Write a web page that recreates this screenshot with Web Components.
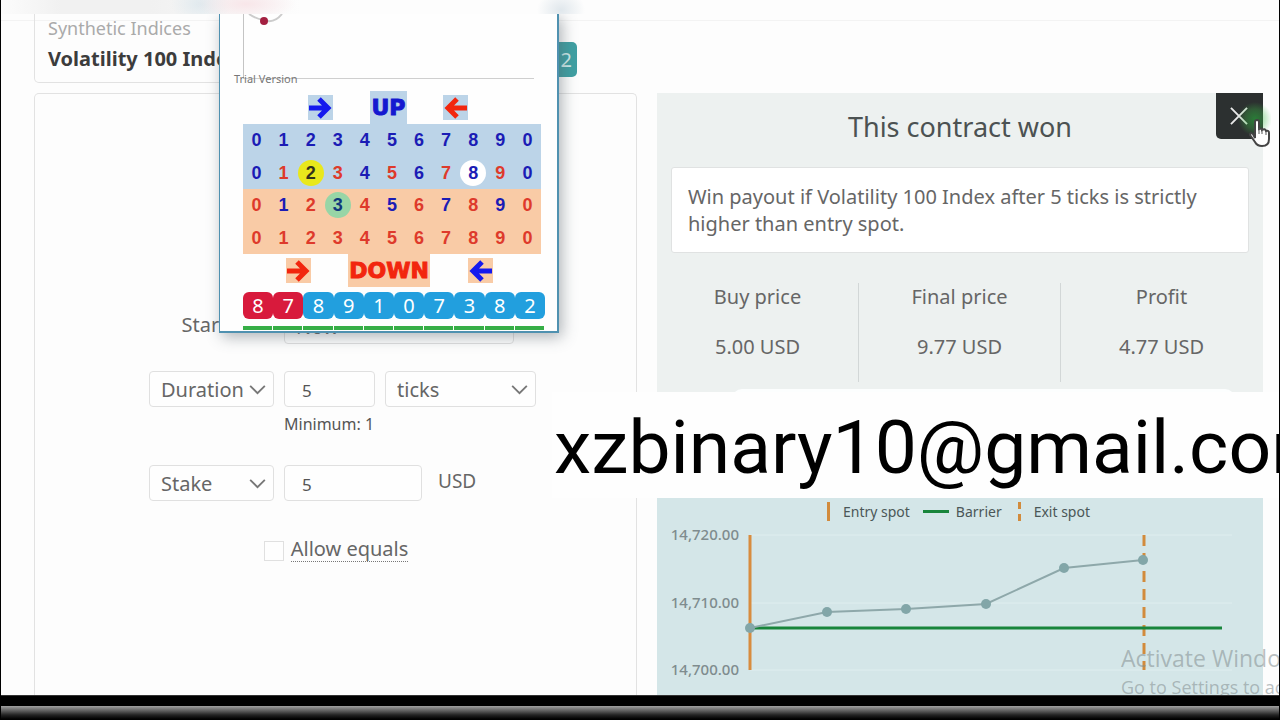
<!DOCTYPE html>
<html lang="en">
<head>
<meta charset="utf-8">
<title>Contract result</title>
<style>
  html, body { margin: 0; background: #000; }
  body { font-family: "Noto Sans", "Open Sans", sans-serif; color: #666; }
</style>
</head>
<body>
<trade-stage>
  <symbol-card slot="left" market="Synthetic Indices" name="Volatility 100 Index"></symbol-card>
  <trade-form slot="left"></trade-form>
  <contract-panel slot="right" heading="This contract won">
    <span slot="summary">Win payout if Volatility 100 Index after 5 ticks is strictly higher than entry spot.</span>
    <price-cell slot="prices" label="Buy price">5.00 USD</price-cell>
    <price-cell slot="prices" label="Final price">9.77 USD</price-cell>
    <price-cell slot="prices" label="Profit">4.77 USD</price-cell>
    <tick-chart slot="chart"></tick-chart>
  </contract-panel>
  <last-digit slot="overlay">2</last-digit>
  <analysis-window slot="overlay"></analysis-window>
  <os-watermark slot="overlay"></os-watermark>
  <mail-banner slot="overlay">xzbinary10@gmail.com</mail-banner>
  <hand-pointer slot="overlay"></hand-pointer>
</trade-stage>

<script>
const define = (tag, render) => customElements.define(tag, class extends HTMLElement {
  constructor() { super(); this.attachShadow({ mode: 'open' }); }
  connectedCallback() { this.shadowRoot.innerHTML = render(this); }
});

define('trade-stage', () => `
<style>
  :host { display: grid; grid-template-rows: 14px 1fr 25px; min-height: 100vh; position: relative;
    overflow: hidden; box-sizing: border-box; border: solid #000; border-width: 0 1px; background: #fdfdfd; }
  .strip { background:
    radial-gradient(ellipse 50px 16px at 245px 4px, #f8e6e9, transparent),
    radial-gradient(ellipse 30px 20px at 200px 4px, #dfe9ee, transparent),
    radial-gradient(ellipse 24px 20px at 560px 10px, #e0e7ec, transparent),
    linear-gradient(90deg, #fcfcfc, #f1f1f1 60px, #f1f1f1 150px, #fdfdfd 300px); }
  main { display: grid; grid-template-columns: 199fr 200fr; gap: 20px; padding: 0 16px 0 33px;
    background: linear-gradient(#f3f3f3, #f3f3f3) 0 6px / 100% 1px no-repeat; }
  .left { display: flex; flex-direction: column; gap: 10px; min-width: 0; }
  .right { display: flex; flex-direction: column; padding-top: 79px; min-width: 0; }
  .bar { background: linear-gradient(#333 0 1px, #000 1px 11px, #a0a0a0 11px, #777 14px, #222 20px, #000 24px);
    position: relative; z-index: 5; }
</style>
<div class="strip"></div>
<main>
  <div class="left"><slot name="left"></slot></div>
  <div class="right"><slot name="right"></slot></div>
</main>
<div class="bar"></div>
<slot name="overlay"></slot>`);

define('symbol-card', el => `
<style>
  :host { display: block; box-sizing: border-box; height: 69px; width: 440px; padding: 2px 13px;
    border: 1px solid #e2e2e2; border-top: 0; border-radius: 0 0 5px 5px; }
  div { font-size: 18px; line-height: 24px; color: #aaa; }
  strong { display: block; margin-top: 6px; font-size: 20px; line-height: 26px; font-weight: 700; color: #3c3c3c; }
</style>
<div>${el.getAttribute('market')}</div><strong>${el.getAttribute('name')}</strong>`);

define('select-field', el => `
<style>
  :host { display: block; position: relative; }
  select { appearance: none; box-sizing: border-box; width: 100%; height: 36px; margin: 0; padding: 0 11px;
    font: inherit; font-size: 20px; color: #666; background: #fefefe; border: 1px solid #e0e0e0; border-radius: 4px; }
  svg { position: absolute; right: 8px; top: 13px; pointer-events: none; }
</style>
<select aria-label="${el.getAttribute('label')}"><option>${el.textContent}</option></select>
<svg width="17" height="11" viewBox="0 0 18 12" fill="none" stroke="#777" stroke-width="2"><path d="M1 2 L9 10 L17 2"/></svg>`);

define('trade-form', () => `
<style>
  :host { display: block; flex: 1; box-sizing: border-box; padding: 214px 0 0 114px;
    border: 1px solid #e2e2e2; border-bottom: 0; border-radius: 5px 5px 0 0; }
  form { display: grid; width: 387px; grid-template-columns: 125px 91px 1fr; column-gap: 10px; }
  .start { text-align: right; line-height: 34px; font-size: 20px; }
  .now { grid-column: 2 / 4; width: 230px; }
  input[type=text] { box-sizing: border-box; height: 36px; width: 100%; padding: 2px 17px 0; font: inherit;
    font-size: 17px; color: #555; background: #fefefe; border: 1px solid #e0e0e0; border-radius: 4px; }
  form > .row { margin: 27px 0 0; }
  .min { grid-column: 2 / 4; margin-top: 7px; font-size: 16px; line-height: 20px; color: #555; }
  .stake { margin-top: 31px; }
  .money { grid-column: 2 / 4; display: flex; gap: 16px; }
  .money input[type=text] { width: 138px; margin: 0; }
  .money span { line-height: 32px; font-size: 19px; }
  .allow { grid-column: 1 / 4; display: flex; justify-content: center; gap: 7px; margin: 36px 13px 0 0; font-size: 20px; }
  .allow input { appearance: none; box-sizing: border-box; width: 20px; height: 20px; margin: 4px 0 0; border: 1px solid #e0e0e0; background: #fefefe; }
  .allow label { line-height: 24px; border-bottom: 1px dotted #777; }
</style>
<form>
  <span class="start">Start time</span><select-field class="now" label="Start time">Now</select-field>
  <select-field class="row" label="Expiry type">Duration</select-field>
  <input class="row" type="text" value="5" aria-label="Duration">
  <select-field class="row" label="Duration unit">ticks</select-field>
  <div class="min">Minimum: 1</div>
  <select-field class="stake" label="Amount type">Stake</select-field>
  <div class="money stake"><input type="text" value="5" aria-label="Stake"><span>USD</span></div>
  <div class="allow"><input id="eq" type="checkbox"><label for="eq">Allow equals</label></div>
</form>`);

define('contract-panel', el => `
<style>
  :host { display: flex; flex-direction: column; flex: 1; position: relative; background: #edf1f0; }
  h1 { margin: 0; padding: 15px 0 17px; text-align: center; font-size: 27px; line-height: 38px; font-weight: 400; color: #4c5252; }
  button { position: absolute; right: 0; top: 0; width: 47px; height: 46px; padding: 0; border: 0; border-radius: 0 0 0 5px; background: #2c3030; }
  button svg { display: block; margin: auto; }
  .summary { margin: 4px 14px 0; padding: 15px 16px; border: 1px solid #e0e2e2; border-radius: 3px; background: #fff; font-size: 20px; line-height: 27px; color: #666; }
  .prices { display: grid; grid-template-columns: repeat(3, 1fr); margin-top: 30px; }
  .chart { flex: 1; margin-top: 7px; display: flex; flex-direction: column; }
  .tab { height: 60px; margin: 0 28px 0 75px; border-radius: 10px; background: #fcfefe; }
  ::slotted(tick-chart) { flex: 1; }
</style>
<h1>${el.getAttribute('heading')}</h1>
<button type="button" aria-label="Close"><svg width="18" height="18" viewBox="0 0 19 19" stroke="#e8e8e8" stroke-width="2"><path d="M1 1 L18 18 M18 1 L1 18"/></svg></button>
<div class="summary"><slot name="summary"></slot></div>
<div class="prices"><slot name="prices"></slot></div>
<div class="chart"><div class="tab"></div><slot name="chart"></slot></div>`);

define('price-cell', el => `
<style>
  :host { display: block; box-sizing: border-box; height: 99px; text-align: center; font-size: 20px; color: #666; border-right: 1px solid #d2d7d7; }
  :host(:last-of-type) { border-right-color: transparent; }
  div { line-height: 28px; }
  .value { margin-top: 22px; }
</style>
<div>${el.getAttribute('label')}</div><div class="value"><slot></slot></div>`);

define('tick-chart', () => {
  const pts = [[93, 107], [170, 91], [249, 88], [329, 83], [407, 47], [486, 39]];
  const labels = [['14,720.00', 14], ['14,710.00', 82], ['14,700.00', 149]];
  return `
<style>
  :host { display: block; padding-top: 52px; background: #d4e6e8; }
  .legend { display: flex; justify-content: center; align-items: center; height: 20px; gap: 7px; font-size: 14px; color: #4b5757; }
  .legend span { display: flex; align-items: center; gap: 7px; margin-right: 6px; }
  .entry, .exit { width: 3px; height: 19px; margin: 0 6px 0 3px; background: #d28b3c; }
  .exit { background: linear-gradient(#d28b3c 0 7px, transparent 7px 12px, #d28b3c 12px); }
  .barrier { width: 26px; height: 3px; background: #18853b; }
  svg { display: block; width: 100%; height: 174px; }
  text { font: 500 15px "Noto Sans", sans-serif; fill: #7f8c8e; }
</style>
<div class="legend"><span><i class="entry"></i>Entry spot</span><span><i class="barrier"></i>Barrier</span><span><i class="exit"></i>Exit spot</span></div>
<svg viewBox="0 0 606 174" role="img" aria-label="Tick chart">
  ${labels.map(([t, y]) => `<text x="82" y="${y + 5}" text-anchor="end">${t}</text><path d="M93 ${y} H575" stroke="#dfeeef"/>`).join('')}
  <path d="M93 14 V149" stroke="#d88c3e" stroke-width="3"/>
  <path d="M487 14 V149" stroke="#d28b3c" stroke-width="3" stroke-dasharray="11 7"/>
  <path d="M93 107 H565" stroke="#18853b" stroke-width="3"/>
  <polyline points="${pts.join(' ')}" fill="none" stroke="#8ea8aa" stroke-width="2"/>
  ${pts.map(([x, y]) => `<circle cx="${x}" cy="${y}" r="5" fill="#82a6a8"/>`).join('')}
</svg>`;
});

define('last-digit', () => `
<style>
  :host { position: absolute; left: 545px; top: 42px; box-sizing: border-box; width: 31px; height: 35px; padding-right: 5px; border-radius: 5px;
    background: #3f9fa2; color: #cdeaea; font-size: 20px; line-height: 35px; text-align: right; }
</style><slot></slot>`);

const arrow = (color, flip) => `<svg width="25" height="25" viewBox="0 0 25 25" fill="none" stroke="${color}" stroke-width="5"><path d="${flip ? 'M24 13 H5 M14 4 L5 13 L14 22' : 'M1 13 H20 M11 4 L20 13 L11 22'}"/></svg>`;

define('analysis-window', () => {
  const rows = ['bbbbbbbbbbb', 'brbrbrbrbrb', 'rbrbrbrbrbr', 'rrrrrrrrrrr'];
  const marks = { '1-2': 'yellow', '1-8': 'white', '2-3': 'green' };
  const cell = (c, r, i) => {
    const m = marks[r + '-' + i] || '';
    return `<td class="${m ? 'b' : c}"><span class="${m}">${i % 10}</span></td>`;
  };
  return `
<style>
  :host { position: absolute; left: 218px; top: 14px; box-sizing: border-box; width: 340px; height: 319px;
    border: solid #4f91b0; border-width: 0 2px 2px 1px; background: #fefefe; box-shadow: 3px 4px 14px rgba(80,90,100,.45); clip-path: inset(0 -30px -30px -30px);
    padding: 0 12px 0 23px; display: flex; flex-direction: column; font-family: "Liberation Sans", sans-serif; }
  .plot { position: relative; height: 64px; margin-right: 11px; border-left: 1px solid #c4c4c4; border-bottom: 1px solid #cfcfcf; }
  .plot svg { display: block; }
  .trial { position: absolute; left: -10px; top: 57px; font-size: 11px; line-height: 16px; color: #777; font-family: "Noto Sans", sans-serif; }
  .head { display: grid; width: 298px; justify-items: center; align-items: center; }
  .up { margin-top: 12px; height: 33px; grid-template-columns: 127px 37px 134px; }
  .down { height: 33px; grid-template-columns: 105px 82px 111px; }
  .head svg { background: var(--tint); }
  .head b { width: 100%; text-align: center; font: 700 22px/33px "DejaVu Sans", sans-serif; background: var(--tint); -webkit-text-stroke: 1px currentColor; }
  .up { --tint: #bcd4e8; color: #1519d0; } .down { --tint: #f9cba6; color: #f2260e; }
  .up svg:first-child { margin-left: 28px; } .up svg:last-child { margin-right: 37px; }
  .down svg:first-child { margin-left: 5px; } .down svg:last-child { margin-left: -11px; }
  table { width: 298px; height: 130px; border-collapse: collapse; table-layout: fixed; }
  tr { background: #bcd4e8; } tr:nth-child(n+3) { background: #f9cba6; }
  td { padding: 0; text-align: center; font-size: 18px; font-weight: 700; line-height: 26px; }
  .b { color: #1b1cb5; } .r { color: #de3a2b; }
  td span { display: block; width: 26px; margin: auto; border-radius: 50%; }
  .yellow { background: #e9e81c; color: #33321c; } .white { background: #fff; } .green { background: #98d5a6; color: #10377c; }
  ol { display: grid; grid-template-columns: repeat(10, 1fr); margin: 5px 0 0; padding: 0; list-style: none; font-family: "Noto Sans", sans-serif; }
  li { height: 38px; color: #fff; text-align: center; font-size: 20px; line-height: 27px; }
  li span { display: block; height: 27px; border-radius: 6px; background: #229fde; }
  li.red span { background: #d81a3c; }
  li::after { content: ""; display: block; height: 4px; margin: 7px 1px 0 0; background: #36ae46; }
</style>
<div class="plot"><svg width="60" height="20" viewBox="0 0 60 20"><path d="M5 0 Q12 5 20 6 Q30 10 38 0" fill="none" stroke="#ccc" stroke-width="2"/><circle cx="20" cy="7" r="4" fill="#a31f40"/></svg><span class="trial">Trial Version</span></div>
<div class="head up">${arrow('#1519ee', false)}<b>UP</b>${arrow('#f2260e', true)}</div>
<table>${rows.map((row, r) => `<tr>${[...row].map((c, i) => cell(c, r, i)).join('')}</tr>`).join('')}</table>
<div class="head down">${arrow('#f2260e', false)}<b>DOWN</b>${arrow('#1519ee', true)}</div>
<ol>${[...'8789107382'].map((d, i) => `<li${i < 2 ? ' class="red"' : ''}><span>${d}</span></li>`).join('')}</ol>`;
});

define('os-watermark', () => `
<style>
  :host { position: absolute; left: 1120px; right: 0; top: 644px; height: 51px; overflow: hidden; white-space: nowrap;
    color: rgba(130,140,142,.55); font-family: "Open Sans", sans-serif; }
  div { font-size: 23px; line-height: 28px; } p { margin: 0; font-size: 18px; line-height: 30px; }
</style><div>Activate Windows</div><p>Go to Settings to activate Windows.</p>`);

define('mail-banner', () => `
<style>
  :host { position: absolute; left: 551px; right: 0; top: 392px; height: 106px; padding-left: 2px; box-sizing: border-box; overflow: hidden;
    white-space: nowrap; background: #fefefe; color: #000; font: 75px/110px Roboto, sans-serif; }
</style><slot></slot>`);

define('hand-pointer', () => `
<style>
  :host { position: absolute; right: 8px; top: 101px; width: 34px; height: 48px;
    background: radial-gradient(circle at 18px 18px, rgba(40,175,60,.6), rgba(60,190,70,.3) 10px, transparent 17px); pointer-events: none; }
  svg { position: absolute; left: 12px; top: 18px; }
</style>
<svg width="22" height="29" viewBox="0 0 22 29"><path d="M6 19 V3 Q6 1 8 1 Q10 1 10 3 V10 Q13 9 13 11 Q16 9 17 12 Q20 11 20 14 V20 Q20 27 13 27 Q8 27 6 23 L1 16 Q1 13 4 15 Z" fill="#fff" stroke="#444" stroke-width="2"/><path d="M10 9 V15 M13 10 V15 M17 12 V16" stroke="#555"/></svg>`);
</script>
</body>
</html>
